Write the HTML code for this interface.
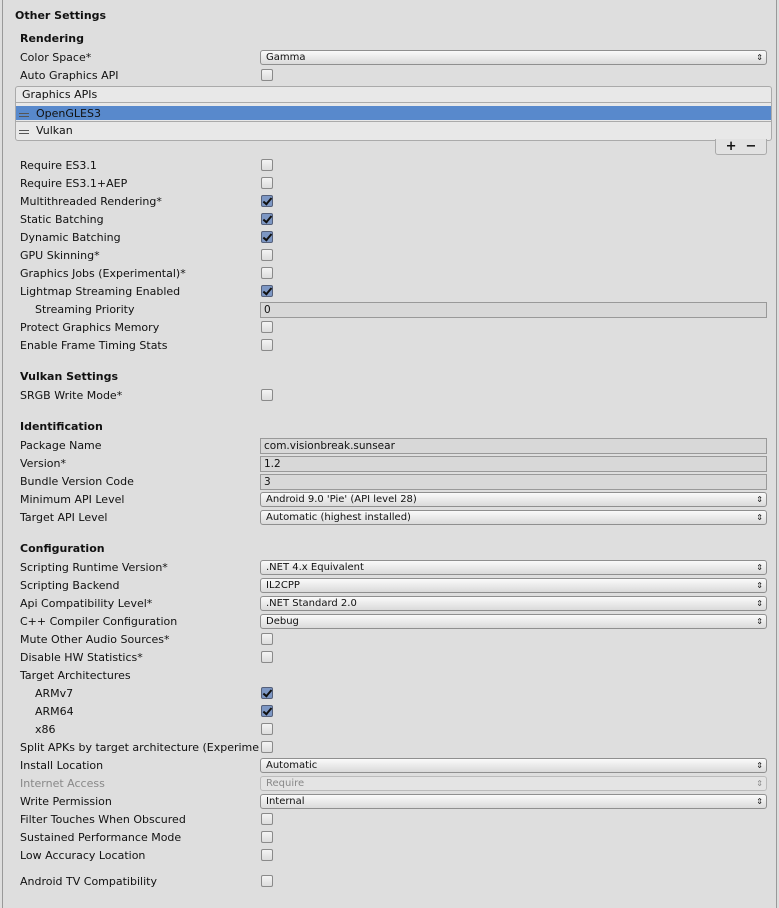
<!DOCTYPE html>
<html><head><meta charset="utf-8"><style>
body{margin:0;width:779px;height:898px;background:#dedede;position:relative;overflow:hidden;font-family:"DejaVu Sans","Liberation Sans",sans-serif;font-size:11px;color:#111}
.fr{position:absolute;left:2px;top:-2px;width:773px;height:910px;border-left:1px solid #999;border-right:1px solid #999}
.l{position:absolute;left:20px;line-height:14px;white-space:nowrap;margin-top:1px}
.h{font-weight:bold;font-size:11px}
.cb{position:absolute;left:261px;width:10px;height:10px;border:1px solid #8a8a8a;border-radius:2px;background:linear-gradient(#f4f4f4,#dcdcdc)}
.cb.on{background:#7d97c4;border-color:#55607a}
.cb.on::after{content:"";position:absolute;left:3px;top:0px;width:3px;height:7px;border:solid #111;border-width:0 2px 2px 0;transform:rotate(40deg)}
.dd{position:absolute;left:260px;height:13px;border:1px solid #8f8f8f;border-radius:3px;background:linear-gradient(#fafafa,#dadada);font-size:10px;line-height:13px;padding-left:5px;width:500px}
.dd::after{content:"⇕";position:absolute;right:3px;top:0;font-size:8px}
.tf{position:absolute;left:260px;padding-left:3px;height:14px;border:1px solid #999;background:#d8d8d8;line-height:14px;font-size:10.5px;width:502px}
.dis{color:#888}
.hd{position:absolute;left:19px;width:10px;height:2px;border-top:1px solid #555;border-bottom:1px solid #555}
</style></head><body>
<div class="fr"></div>
<div class="l h" style="left:15px;top:8px">Other Settings</div>
<div class="l h" style="top:31px">Rendering</div>
<div class="l" style="top:50px">Color Space*</div><div class="dd" style="top:50px">Gamma</div>
<div class="l" style="top:68px">Auto Graphics API</div><div class="cb" style="top:69px"></div>
<div style="position:absolute;left:15px;top:86px;width:755px;height:53px;border:1px solid #aaa;border-radius:3px;background:#e8e8e8"></div>
<div class="l" style="left:22px;top:87px">Graphics APIs</div>
<div style="position:absolute;left:16px;top:102px;width:755px;height:1px;background:#aaa"></div>
<div style="position:absolute;left:16px;top:106px;width:755px;height:14px;background:#5889cc"></div>
<div style="position:absolute;left:16px;top:121px;width:755px;height:1px;background:#aaa"></div>
<div class="hd" style="top:113px"></div><div class="l" style="left:36px;top:106px">OpenGLES3</div>
<div class="hd" style="top:130px"></div><div class="l" style="left:36px;top:123px">Vulkan</div>
<div style="position:absolute;left:715px;top:139px;width:50px;height:15px;border:1px solid #aaa;border-top:none;border-radius:0 0 3px 3px;background:#e2e2e2;font-size:13px;font-weight:bold;line-height:15px;text-align:center">+&nbsp;&nbsp;−</div>
<div class="l" style="top:158px">Require ES3.1</div><div class="cb" style="top:159px"></div>
<div class="l" style="top:176px">Require ES3.1+AEP</div><div class="cb" style="top:177px"></div>
<div class="l" style="top:194px">Multithreaded Rendering*</div><div class="cb on" style="top:195px"></div>
<div class="l" style="top:212px">Static Batching</div><div class="cb on" style="top:213px"></div>
<div class="l" style="top:230px">Dynamic Batching</div><div class="cb on" style="top:231px"></div>
<div class="l" style="top:248px">GPU Skinning*</div><div class="cb" style="top:249px"></div>
<div class="l" style="top:266px">Graphics Jobs (Experimental)*</div><div class="cb" style="top:267px"></div>
<div class="l" style="top:284px">Lightmap Streaming Enabled</div><div class="cb on" style="top:285px"></div>
<div class="l" style="left:35px;top:302px">Streaming Priority</div><div class="tf" style="top:302px">0</div>
<div class="l" style="top:320px">Protect Graphics Memory</div><div class="cb" style="top:321px"></div>
<div class="l" style="top:338px">Enable Frame Timing Stats</div><div class="cb" style="top:339px"></div>
<div class="l h" style="top:369px">Vulkan Settings</div>
<div class="l" style="top:388px">SRGB Write Mode*</div><div class="cb" style="top:389px"></div>
<div class="l h" style="top:419px">Identification</div>
<div class="l" style="top:438px">Package Name</div><div class="tf" style="top:438px">com.visionbreak.sunsear</div>
<div class="l" style="top:456px">Version*</div><div class="tf" style="top:456px">1.2</div>
<div class="l" style="top:474px">Bundle Version Code</div><div class="tf" style="top:474px">3</div>
<div class="l" style="top:492px">Minimum API Level</div><div class="dd" style="top:492px">Android 9.0 'Pie' (API level 28)</div>
<div class="l" style="top:510px">Target API Level</div><div class="dd" style="top:510px">Automatic (highest installed)</div>
<div class="l h" style="top:541px">Configuration</div>
<div class="l" style="top:560px">Scripting Runtime Version*</div><div class="dd" style="top:560px">.NET 4.x Equivalent</div>
<div class="l" style="top:578px">Scripting Backend</div><div class="dd" style="top:578px">IL2CPP</div>
<div class="l" style="top:596px">Api Compatibility Level*</div><div class="dd" style="top:596px">.NET Standard 2.0</div>
<div class="l" style="top:614px">C++ Compiler Configuration</div><div class="dd" style="top:614px">Debug</div>
<div class="l" style="top:632px">Mute Other Audio Sources*</div><div class="cb" style="top:633px"></div>
<div class="l" style="top:650px">Disable HW Statistics*</div><div class="cb" style="top:651px"></div>
<div class="l" style="top:668px">Target Architectures</div>
<div class="l" style="left:35px;top:686px">ARMv7</div><div class="cb on" style="top:687px"></div>
<div class="l" style="left:35px;top:704px">ARM64</div><div class="cb on" style="top:705px"></div>
<div class="l" style="left:35px;top:722px">x86</div><div class="cb" style="top:723px"></div>
<div class="l" style="top:740px;width:239px;overflow:hidden">Split APKs by target architecture (Experimental)</div><div class="cb" style="top:741px"></div>
<div class="l" style="top:758px">Install Location</div><div class="dd" style="top:758px">Automatic</div>
<div class="l dis" style="top:776px">Internet Access</div><div class="dd dis" style="top:776px;border-color:#bbb;background:#e4e4e4">Require</div>
<div class="l" style="top:794px">Write Permission</div><div class="dd" style="top:794px">Internal</div>
<div class="l" style="top:812px">Filter Touches When Obscured</div><div class="cb" style="top:813px"></div>
<div class="l" style="top:830px">Sustained Performance Mode</div><div class="cb" style="top:831px"></div>
<div class="l" style="top:848px">Low Accuracy Location</div><div class="cb" style="top:849px"></div>
<div class="l" style="top:874px">Android TV Compatibility</div><div class="cb" style="top:875px"></div>
</body></html>
